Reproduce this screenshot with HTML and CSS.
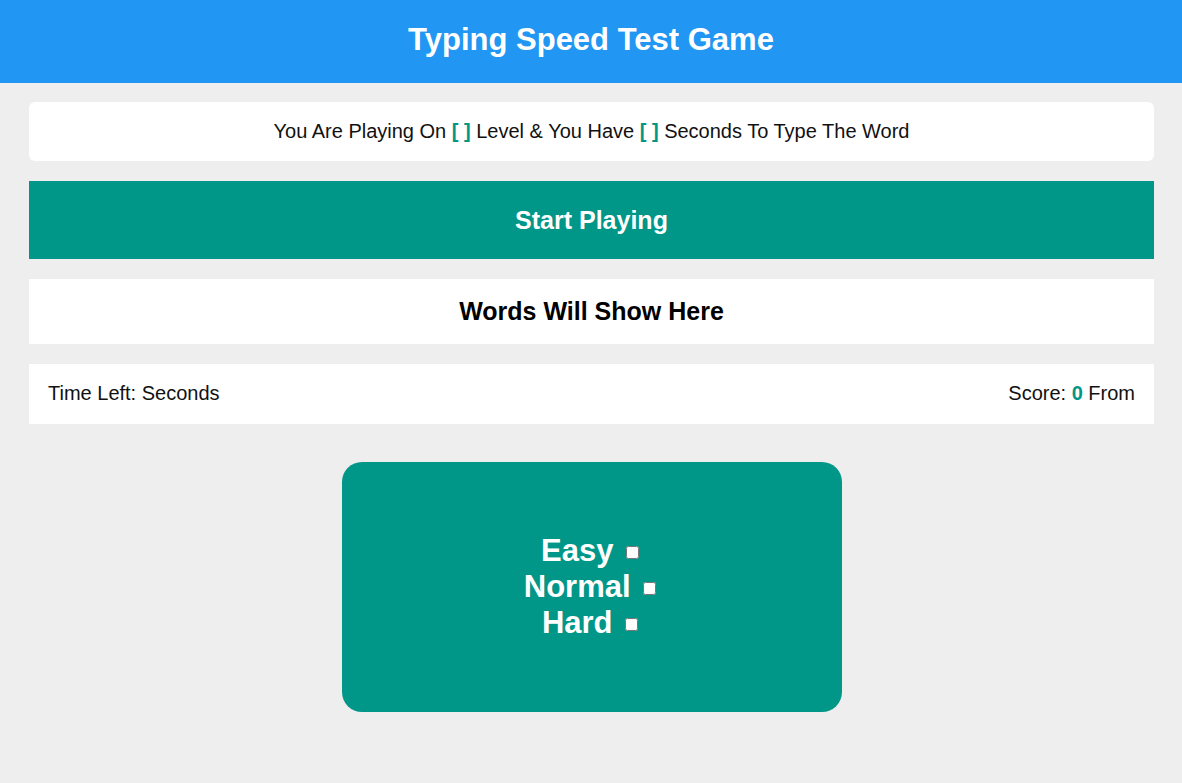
FILE: index.html
```html
<!DOCTYPE html>
<html lang="en">
<head>
<meta charset="UTF-8">
<title>Typing Speed Test Game</title>
<link rel="stylesheet" href="styles.css">
</head>
<body>
  <header class="top-bar">
    <h1 class="title">Typing Speed Test Game</h1>
  </header>
  <main class="game">
    <div class="message">You Are Playing On <span class="accent">[ ]</span> Level &amp; You Have <span class="accent">[ ]</span> Seconds To Type The Word</div>
    <div class="start">Start Playing</div>
    <div class="the-word">Words Will Show Here</div>
    <div class="control">
      <span class="time">Time Left: <span class="accent"></span>Seconds</span>
      <span class="score">Score: <span class="accent">0</span> From <span class="accent"></span></span>
    </div>
    <div class="levels">
      <label class="level">Easy <input type="checkbox"></label>
      <label class="level">Normal <input type="checkbox"></label>
      <label class="level">Hard <input type="checkbox"></label>
    </div>
  </main>
</body>
</html>
```

FILE: styles.css
```css
* { box-sizing: border-box; }
html, body { margin: 0; padding: 0; }
body {
  background: #eeeeee;
  font-family: "Liberation Sans", Arial, sans-serif;
  color: #000;
}
.top-bar {
  background: #2196f3;
  height: 83px;
  display: flex;
  align-items: center;
  justify-content: center;
  padding-bottom: 4px;
}
.title {
  margin: 0;
  color: #fff;
  font-size: 31px;
  font-weight: bold;
  line-height: 1;
}
.game {
  padding: 19px 28px 0 29px;
  display: flex;
  flex-direction: column;
}
.accent { color: #009688; font-weight: bold; }
.message {
  background: #fff;
  border-radius: 6px;
  padding: 18px;
  text-align: center;
  font-size: 20px;
  line-height: 23px;
  color: #111;
}
.start {
  margin-top: 20px;
  background: #009688;
  color: #fff;
  font-size: 25px;
  font-weight: bold;
  text-align: center;
  line-height: 28px;
  padding: 25px 0;
}
.the-word {
  margin-top: 20px;
  background: #fff;
  font-size: 25px;
  font-weight: bold;
  text-align: center;
  line-height: 29px;
  padding: 18px 0;
}
.control {
  margin-top: 20px;
  background: #fff;
  display: flex;
  justify-content: space-between;
  padding: 18px 19px 19px;
  font-size: 20px;
  line-height: 23px;
  color: #111;
}
.levels {
  margin: 38px auto 0;
  width: 500px;
  height: 250px;
  background: #009688;
  border-radius: 20px;
  display: flex;
  flex-direction: column;
  align-items: center;
  justify-content: center;
}
.level {
  color: #fff;
  font-size: 31px;
  font-weight: bold;
  line-height: 36px;
}
.level input {
  margin: 0 3px 0 4px;
  width: 13px;
  height: 13px;
  vertical-align: middle;
}
```
